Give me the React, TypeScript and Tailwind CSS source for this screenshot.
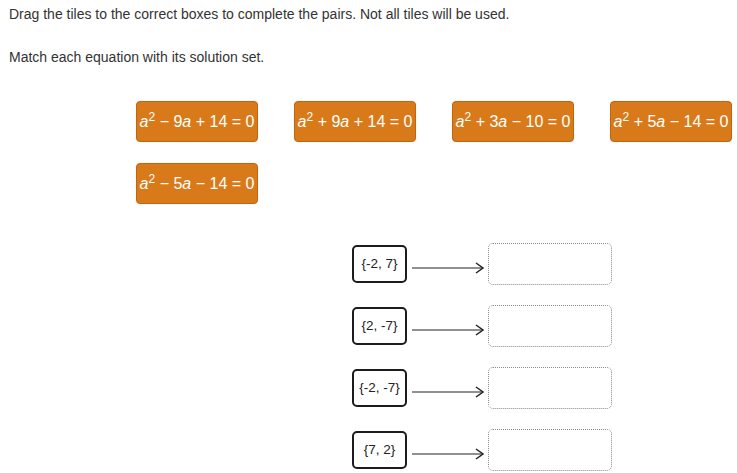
import React from "react";

const tiles: { sign1: string; b: string; sign2: string; c: string }[] = [
  { sign1: "−", b: "9", sign2: "+", c: "14" },
  { sign1: "+", b: "9", sign2: "+", c: "14" },
  { sign1: "+", b: "3", sign2: "−", c: "10" },
  { sign1: "+", b: "5", sign2: "−", c: "14" },
  { sign1: "−", b: "5", sign2: "−", c: "14" },
];

function Tile({ t }: { t: (typeof tiles)[number] }) {
  return (
    <div className="w-[122px] h-[41px] rounded-[4px] bg-[#d97a1a] border border-[#c0660f] flex items-center justify-center text-white text-[16px] whitespace-nowrap shadow-[0_0_2px_rgba(200,220,240,0.6)]">
      <span>
        <i>a</i>
        <sup className="text-[12px] relative top-[-6px]">2</sup> {t.sign1} {t.b}
        <i>a</i> {t.sign2} {t.c} = 0
      </span>
    </div>
  );
}

const sets = ["{-2, 7}", "{2, -7}", "{-2, -7}", "{7, 2}"];

function Row({ label }: { label: string }) {
  return (
    <div className="flex items-center h-[42px]">
      <div className="w-[55px] h-[38px] border-2 border-[#1c1c1c] rounded-[5px] flex items-center justify-center text-[13.5px] text-[#222]">
        {label}
      </div>
      <svg width="81" height="42" viewBox="0 0 81 42" className="shrink-0">
        <line x1="5" y1="25" x2="76" y2="25" stroke="#222" strokeWidth="1.2" />
        <path d="M69 20 L76 25 L69 30" fill="none" stroke="#222" strokeWidth="1.5" />
      </svg>
      <div className="w-[124px] h-[42px] border border-dotted border-[#8a8a8a] rounded-[5px]" />
    </div>
  );
}

export default function App() {
  return (
    <div className="w-[737px] h-[473px] bg-white overflow-hidden font-['Liberation_Sans',Arial,sans-serif]">
      <p className="pl-[9px] pt-[6px] text-[14px] leading-[16px] text-[#333]">
        Drag the tiles to the correct boxes to complete the pairs. Not all tiles will be used.
      </p>
      <p className="pl-[9px] mt-[27px] text-[14px] leading-[16px] text-[#333]">
        Match each equation with its solution set.
      </p>
      <div className="ml-[136px] mt-[36px] w-[600px] flex flex-wrap gap-x-[36px] gap-y-[21px]">
        {tiles.map((t, i) => (
          <Tile key={i} t={t} />
        ))}
      </div>
      <div className="ml-[352px] mt-[39px] flex flex-col gap-[20px]">
        {sets.map((s) => (
          <Row key={s} label={s} />
        ))}
      </div>
    </div>
  );
}
